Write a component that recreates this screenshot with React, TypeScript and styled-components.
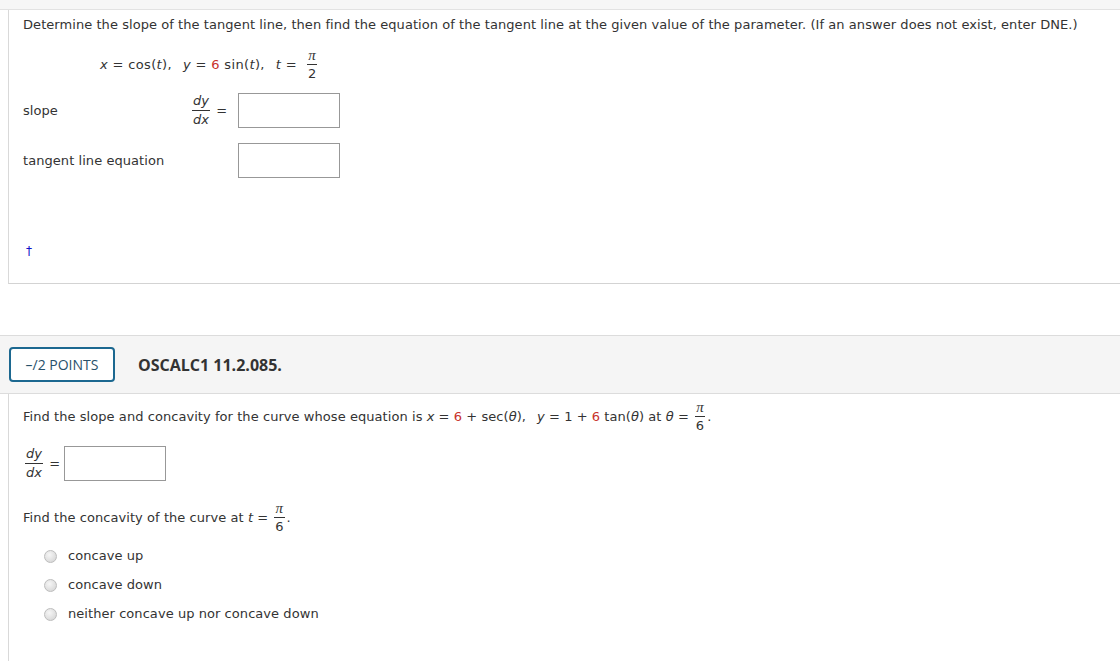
import styled, { createGlobalStyle } from "styled-components";

const GlobalStyle = createGlobalStyle`
  body {
    margin: 0;
    background: #fff;
    font-family: "DejaVu Sans", Verdana, sans-serif;
    font-size: 13px;
    color: #333;
  }
`;

const TopStrip = styled.div`
  height: 9px;
  background: #f6f6f6;
  border-bottom: 1px solid #e2e2e2;
`;

const Panel = styled.div<{ $bottom?: boolean }>`
  margin-left: 8px;
  border-left: 1px solid #d9d9d9;
  border-bottom: ${({ $bottom }) => ($bottom ? "1px solid #d3d3d3" : "none")};
  padding: 0 14px;
  display: flex;
  flex-direction: column;
  letter-spacing: 0.06px;
`;

const Line = styled.div<{ $mt?: number; $ml?: number; $wide?: boolean }>`
  display: flex;
  align-items: center;
  line-height: 16px;
  white-space: pre;
  margin-top: ${({ $mt }) => $mt ?? 0}px;
  margin-left: ${({ $ml }) => $ml ?? 0}px;
  letter-spacing: ${({ $wide }) => ($wide ? "0.35px" : "inherit")};
`;

const I = styled.span`
  font-style: italic;
`;

const Red = styled.span`
  color: #c8312c;
`;

const Sep = styled.span`
  display: inline-block;
  width: 11px;
`;

const Fraction = styled.span<{ $lead?: number }>`
  display: inline-flex;
  flex-direction: column;
  align-items: center;
  margin: 0 2px 0 ${({ $lead }) => $lead ?? 2}px;
  font-size: 13px;
  line-height: 14px;
  letter-spacing: 0;
`;

const Num = styled.span`
  height: 14px;
  padding: 0 1px 2px;
`;

const PiGlyph = styled.span`
  display: inline-block;
  height: 14px;
  line-height: 14px;
  vertical-align: top;
  font-family: "Liberation Serif", "Times New Roman", serif;
  font-style: italic;
  font-size: 15px;
`;

const Bar = styled.span`
  align-self: stretch;
  border-top: 1px solid #333;
`;

const Den = styled.span`
  padding: 2px 1px 0;
`;

const Label = styled.span`
  width: 167px;
`;

const MathCell = styled.span`
  width: 48px;
  display: flex;
  align-items: center;
`;

const AnswerBox = styled.span`
  display: inline-block;
  width: 100px;
  height: 33px;
  border: 1px solid #989898;
  background: #fff;
`;

const Dagger = styled.span`
  color: #1010c8;
  font-size: 12px;
  margin-left: 3px;
`;

const Gap = styled.div<{ $h: number }>`
  height: ${({ $h }) => $h}px;
`;

const Header = styled.div`
  height: 57px;
  background: #f5f5f5;
  border-top: 1px solid #dcdcdc;
  border-bottom: 1px solid #dcdcdc;
  display: flex;
  align-items: center;
  padding-left: 9px;
  gap: 23px;
  font-family: "Open Sans", sans-serif;
`;

const PointsButton = styled.span`
  box-sizing: border-box;
  height: 35px;
  width: 106px;
  border: 2px solid #1c6890;
  border-radius: 4px;
  display: flex;
  align-items: center;
  justify-content: center;
  font-size: 14px;
  color: #28506a;
  background: #fff;
`;

const Title = styled.span`
  font-size: 16px;
  font-weight: 700;
  color: #333;
`;

const RadioRow = styled.label<{ $mt: number }>`
  display: flex;
  align-items: center;
  gap: 11px;
  margin-left: 21px;
  margin-top: ${({ $mt }) => $mt}px;
  line-height: 16px;
`;

const RadioDot = styled.span`
  box-sizing: border-box;
  width: 13px;
  height: 13px;
  border-radius: 50%;
  border: 1px solid #bdbdbd;
  background: radial-gradient(circle at 40% 35%, #f6f6f6 0%, #dadada 75%);
`;

const DyDx = () => (
  <Fraction>
    <Num>
      <I>dy</I>
    </Num>
    <Bar />
    <Den>
      <I>dx</I>
    </Den>
  </Fraction>
);

const Pi = ({ d, lead }: { d: string; lead?: number }) => (
  <Fraction $lead={lead}>
    <Num>
      <PiGlyph>π</PiGlyph>
    </Num>
    <Bar />
    <Den>{d}</Den>
  </Fraction>
);

const options = ["concave up", "concave down", "neither concave up nor concave down"];

export default function App() {
  return (
    <>
      <GlobalStyle />
      <TopStrip />
      <Panel $bottom>
        <Line $mt={7}>
          Determine the slope of the tangent line, then find the equation of the tangent line at
          the given value of the parameter. (If an answer does not exist, enter DNE.)
        </Line>
        <Line $mt={15} $ml={77} $wide>
          <I>x</I> = cos(<I>t</I>),<Sep />
          <I>y</I> = <Red>6</Red> sin(<I>t</I>),<Sep />
          <I>t</I> =<Pi d="2" lead={10} />
        </Line>
        <Line $mt={12}>
          <Label>slope</Label>
          <MathCell>
            <DyDx /> =
          </MathCell>
          <AnswerBox />
        </Line>
        <Line $mt={15}>
          <Label>tangent line equation</Label>
          <MathCell />
          <AnswerBox />
        </Line>
        <Line $mt={65}>
          <Dagger>†</Dagger>
        </Line>
        <Gap $h={24} />
      </Panel>
      <Gap $h={51} />
      <Header>
        <PointsButton>–/2 POINTS</PointsButton>
        <Title>OSCALC1 11.2.085.</Title>
      </Header>
      <Panel>
        <Line $mt={6}>
          Find the slope and concavity for the curve whose equation is <I>x</I> = <Red>6</Red> +
          sec(<I>θ</I>),<Sep />
          <I>y</I> = 1 + <Red>6</Red> tan(<I>θ</I>) at <I>θ</I> =<Pi d="6" lead={6} />.
        </Line>
        <Line $mt={13}>
          <DyDx />
          {" = "}
          <AnswerBox />
        </Line>
        <Line $mt={20}>
          Find the concavity of the curve at <I>t</I> =<Pi d="6" lead={6} />.
        </Line>
        <RadioRow $mt={14}>
          <RadioDot />
          {options[0]}
        </RadioRow>
        {options.slice(1).map((o) => (
          <RadioRow key={o} $mt={13}>
            <RadioDot />
            {o}
          </RadioRow>
        ))}
        <Gap $h={60} />
      </Panel>
    </>
  );
}
